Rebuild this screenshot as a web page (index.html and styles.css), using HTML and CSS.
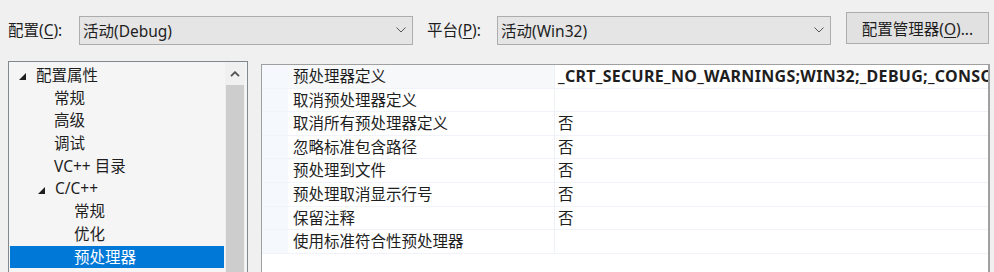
FILE: index.html
```html
<!DOCTYPE html>
<html lang="zh-CN">
<head>
    <meta charset="UTF-8">
    <title>预处理器</title>
    <link rel="stylesheet" href="styles.css">
</head>
<body>
    <div class="toolbar">
        <label class="field-label">配置(<u>C</u>):</label>
        <div class="combo">
            <span>活动(Debug)</span>
            <svg class="chevron" width="10" height="6" viewBox="0 0 10 6"><path d="M0.5 0.5 L5 5 L9.5 0.5" fill="none" stroke="#555" stroke-width="1"/></svg>
        </div>
        <label class="field-label second">平台(<u>P</u>):</label>
        <div class="combo">
            <span>活动(Win32)</span>
            <svg class="chevron" width="10" height="6" viewBox="0 0 10 6"><path d="M0.5 0.5 L5 5 L9.5 0.5" fill="none" stroke="#555" stroke-width="1"/></svg>
        </div>
        <button class="manager-btn">配置管理器(<u>O</u>)...</button>
    </div>

    <div class="main">
        <div class="tree-panel">
            <ul class="tree">
                <li class="node level-0">
                    <svg class="expander" width="7" height="7" viewBox="0 0 7 7"><polygon points="7,0 7,7 0,7" fill="#1e1e1e"/></svg>
                    配置属性
                </li>
                <li class="node level-1">常规</li>
                <li class="node level-1">高级</li>
                <li class="node level-1">调试</li>
                <li class="node level-1">VC++ 目录</li>
                <li class="node level-1 has-children">
                    <svg class="expander" width="7" height="7" viewBox="0 0 7 7"><polygon points="7,0 7,7 0,7" fill="#1e1e1e"/></svg>
                    C/C++
                </li>
                <li class="node level-2">常规</li>
                <li class="node level-2">优化</li>
                <li class="node level-2 selected">预处理器</li>
            </ul>
            <div class="scrollbar">
                <div class="scroll-up">
                    <svg width="10" height="6" viewBox="0 0 10 6"><path d="M1 5.2 L5 1.2 L9 5.2" fill="none" stroke="#505050" stroke-width="1.8"/></svg>
                </div>
                <div class="scroll-thumb"></div>
            </div>
        </div>

        <div class="grid-panel">
            <div class="grid">
                <div class="row current">
                    <div class="margin"></div>
                    <div class="name">预处理器定义</div>
                    <div class="value bold">_CRT_SECURE_NO_WARNINGS;WIN32;_DEBUG;_CONSOLE</div>
                </div>
                <div class="row">
                    <div class="margin"></div>
                    <div class="name">取消预处理器定义</div>
                    <div class="value"></div>
                </div>
                <div class="row">
                    <div class="margin"></div>
                    <div class="name">取消所有预处理器定义</div>
                    <div class="value">否</div>
                </div>
                <div class="row">
                    <div class="margin"></div>
                    <div class="name">忽略标准包含路径</div>
                    <div class="value">否</div>
                </div>
                <div class="row">
                    <div class="margin"></div>
                    <div class="name">预处理到文件</div>
                    <div class="value">否</div>
                </div>
                <div class="row">
                    <div class="margin"></div>
                    <div class="name">预处理取消显示行号</div>
                    <div class="value">否</div>
                </div>
                <div class="row">
                    <div class="margin"></div>
                    <div class="name">保留注释</div>
                    <div class="value">否</div>
                </div>
                <div class="row">
                    <div class="margin"></div>
                    <div class="name">使用标准符合性预处理器</div>
                    <div class="value"></div>
                </div>
            </div>
        </div>
    </div>
</body>
</html>
```

FILE: styles.css
```css
* {
    margin: 0;
    padding: 0;
    box-sizing: border-box;
}

body {
    background-color: #f0f0f0;
    font-family: 'Noto Sans', 'Noto Sans CJK SC', sans-serif;
    font-size: 15.5px;
    color: #1e1e1e;
    overflow: hidden;
    height: 272px;
}

u {
    text-decoration: underline;
    text-underline-offset: 2px;
}

/* top bar */
.toolbar {
    display: flex;
    align-items: center;
    padding: 14px 0 0 8px;
    height: 46px;
}

.field-label {
    width: 71px;
    line-height: 29px;
}

.field-label.second {
    margin-left: 14px;
    width: 70px;
}

.combo {
    width: 334px;
    height: 29px;
    background-color: #e5e5e5;
    border: 1px solid #adadad;
    display: flex;
    align-items: center;
    justify-content: space-between;
    padding: 0 6px 0 3px;
}

.manager-btn {
    margin-left: 15px;
    width: 143px;
    height: 32px;
    background-color: #e1e1e1;
    border: 1px solid #adadad;
    font: inherit;
    color: inherit;
    align-self: flex-start;
    margin-top: -2px;
}

/* main area */
.main {
    display: flex;
    align-items: flex-start;
    margin-top: 15px;
}

.tree-panel {
    margin-left: 8px;
    width: 240px;
    height: 211px;
    border: 1px solid #828790;
    border-bottom: none;
    background-color: #f5f5f5;
    display: flex;
}

.tree {
    list-style: none;
    flex: 1;
    padding: 2px 1px 0 1px;
}

.node {
    height: 22.7px;
    line-height: 22.7px;
    display: flex;
    align-items: center;
    white-space: nowrap;
}

.expander {
    margin-right: 10px;
    margin-top: 3px;
}

.level-0 {
    padding-left: 9px;
}

.level-1 {
    padding-left: 44px;
}

.level-1.has-children {
    padding-left: 28px;
}

.level-2 {
    padding-left: 64px;
}

.selected {
    background-color: #0078d7;
    color: #ffffff;
}

.scrollbar {
    width: 20px;
    margin-right: 2px;
    display: flex;
    flex-direction: column;
    background-color: #f0f0f0;
}

.scroll-up {
    height: 23px;
    display: flex;
    align-items: center;
    justify-content: center;
}

.scroll-thumb {
    flex: 1;
    margin: 0 1px;
    background-color: #cdcdcd;
}

/* property grid */
.grid-panel {
    margin-left: 13px;
    margin-top: 3px;
    width: 729px;
    height: 208px;
    background-color: #ffffff;
    border-left: 1px solid #a0a0a0;
    border-top: 1px solid #a0a0a0;
    border-right: 2px solid #a0a0a0;
}

.row {
    display: flex;
    height: 23.6px;
    border-bottom: 1px solid #f0f3f9;
}

.row .margin {
    width: 26px;
    background-color: #f5f8fd;
}

.name {
    width: 267px;
    padding-left: 5px;
    line-height: 23px;
    border-right: 1px solid #eef2f8;
    white-space: nowrap;
}

.value {
    flex: 1;
    min-width: 0;
    padding-left: 3px;
    line-height: 23px;
    white-space: nowrap;
    overflow: hidden;
}

.row.current .name {
    background-color: #f7f8fa;
}

.bold {
    font-weight: bold;
    font-size: 16px;
    letter-spacing: 0.3px;
}
```
